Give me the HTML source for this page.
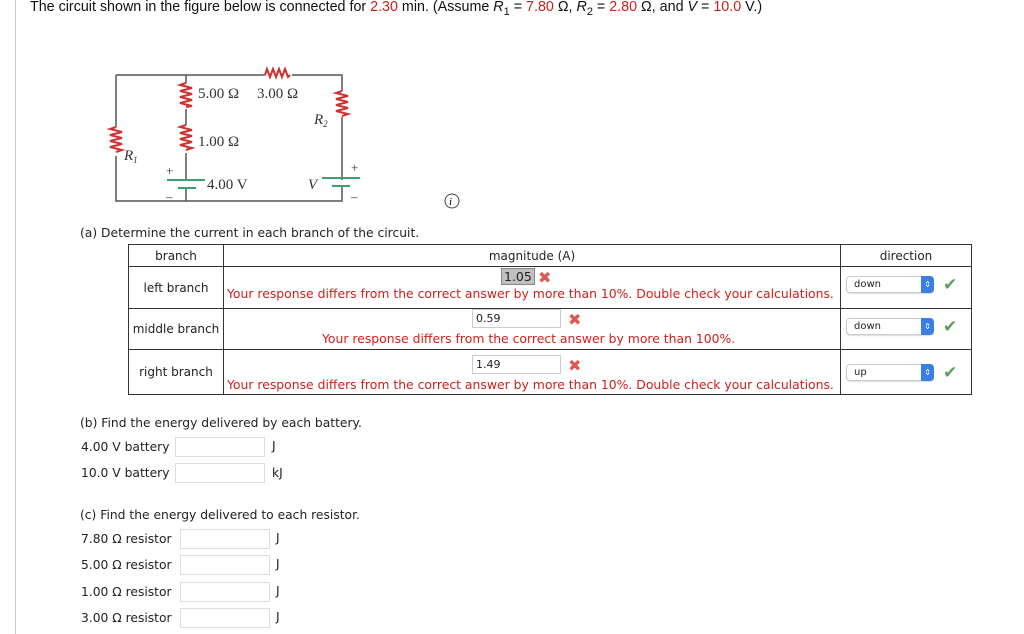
<!DOCTYPE html>
<html><head><meta charset="utf-8"><style>
body{margin:0;width:1024px;height:634px;background:#fff;position:relative;overflow:hidden;font-family:"DejaVu Sans",Verdana,sans-serif;font-size:12.3px;color:#222}
.a{position:absolute;white-space:nowrap}
.red{color:#d0201c;font-size:12.4px}
.vl{position:absolute;left:15px;top:0;width:1px;height:634px;background:#c8c8c8}
table{position:absolute;left:128px;top:244px;border-collapse:collapse}
td{border:1px solid #333;padding:0;text-align:center;font-size:12px}
.inp{position:absolute;border:1px solid #ccc;height:19px;width:89px;padding-left:3px;line-height:18px;font-size:11px;box-sizing:border-box}
.sel{position:absolute;width:88px;height:17px;border:1px solid #ccc;border-radius:4px;background:#fff;font-size:10px;line-height:16px;padding-left:7px;box-sizing:border-box;box-shadow:0 1px 1px #ddd}
.sel b{position:absolute;right:-1px;top:-1px;width:13px;height:17px;background:#3b7ee8;border-radius:0 4px 4px 0;color:#fff;font-size:8px;text-align:center;line-height:17px;font-weight:normal}
.chk{position:absolute;color:#5aa05a;font-size:17px;font-weight:bold}
.x{position:absolute;color:#e05555;font-size:16px;font-weight:bold}
.box{position:absolute;border:1px solid #ddd;width:90px;height:20px;box-sizing:border-box}
</style></head><body>
<div class="vl"></div>
<div class="a" style="left:30px;top:0px;line-height:15px;font-family:'Liberation Sans',sans-serif;font-size:14.3px;color:#111">The circuit shown in the figure below is connected for <span class="red" style="font-size:14.3px">2.30</span> min. (Assume <i>R</i><sub style="font-size:11px;line-height:0">1</sub> = <span class="red" style="font-size:14.3px">7.80</span> Ω, <i>R</i><sub style="font-size:11px;line-height:0">2</sub> = <span class="red" style="font-size:14.3px">2.80</span> Ω, and <i>V</i> = <span class="red" style="font-size:14.3px">10.0</span> V.)</div>

<svg style="position:absolute;left:0;top:0" width="480" height="215">
<g fill="none" stroke="#555" stroke-width="1.5">
<path d="M116 75H265M292 75H342V91M342 117V180M342 187V201H116V156M116 127V75"/>
<path d="M186 75V83M186 109V125M186 153V180M186 188V201"/>
</g>
<g fill="none" stroke="#d03030" stroke-width="2">
<path d="M265 75l2-6l3 8l3-8l3 8l3-8l3 8l3-8l3 8l2-2"/>
<path d="M116 127l-6 2l12 3l-12 3l12 3l-12 3l12 3l-12 3l12 3l-6 2"/>
<path d="M186 83l-6 2l12 3l-12 3l12 3l-12 3l12 3l-12 3l12 3l-6 1"/>
<path d="M186 125l-6 2l12 3l-12 3l12 3l-12 3l12 3l-12 3l12 3l-6 2"/>
<path d="M342 91l-6 2l12 3l-12 3l12 3l-12 3l12 3l-12 3l12 3l-6 2"/>
</g>
<g stroke="#3aa070" stroke-width="2">
<path d="M167 180H205M178 188H196M322 178H360M332 186H350"/>
</g>
<g font-family="Liberation Serif,serif" font-size="15" fill="#333">
<text x="198" y="98">5.00 Ω</text><text x="257" y="98">3.00 Ω</text>
<text x="198" y="146">1.00 Ω</text><text x="207" y="189">4.00 V</text>
<text x="124" y="160" font-style="italic">R<tspan font-size="9" dy="3">1</tspan></text>
<text x="314" y="124" font-style="italic">R<tspan font-size="9" dy="3">2</tspan></text>
<text x="308" y="189" font-style="italic">V</text>
<text x="166" y="175" font-size="13">+</text><text x="166" y="201" font-size="13">–</text>
<text x="351" y="172" font-size="13">+</text><text x="351" y="201" font-size="13">–</text>
</g>
<circle cx="452" cy="201" r="7" fill="none" stroke="#444"/>
<text x="449" y="205" font-family="Liberation Serif,serif" font-style="italic" font-size="11">i</text>
</svg>

<div class="a" style="left:80px;top:226px">(a) Determine the current in each branch of the circuit.</div>
<table>
<tr style="height:22px"><td style="width:94px">branch</td><td style="width:616px">magnitude (A)</td><td style="width:130px">direction</td></tr>
<tr style="height:42px"><td>left branch</td><td></td><td></td></tr>
<tr style="height:41px"><td>middle branch</td><td></td><td></td></tr>
<tr style="height:45px"><td>right branch</td><td></td><td></td></tr>
</table>
<div class="a" style="left:501px;top:268px;background:#c0c0c0;border:1px solid #888;padding:0 2px;font-size:12.5px;line-height:15px">1.05</div>
<div class="a red" style="left:227px;top:286px">Your response differs from the correct answer by more than 10%. Double check your calculations.</div>
<div class="inp" style="left:472px;top:309px">0.59</div>
<div class="a red" style="left:322px;top:331px">Your response differs from the correct answer by more than 100%.</div>
<div class="inp" style="left:472px;top:355px">1.49</div>
<div class="a red" style="left:227px;top:377px">Your response differs from the correct answer by more than 10%. Double check your calculations.</div>
<div class="x" style="left:538px;top:268px">✖</div>
<div class="x" style="left:568px;top:310px">✖</div>
<div class="x" style="left:568px;top:356px">✖</div>
<div class="sel" style="left:846px;top:276px">down<b>⇕</b></div>
<div class="sel" style="left:846px;top:318px">down<b>⇕</b></div>
<div class="sel" style="left:846px;top:364px">up<b>⇕</b></div>
<div class="chk" style="left:943px;top:275px">✔</div>
<div class="chk" style="left:943px;top:317px">✔</div>
<div class="chk" style="left:943px;top:363px">✔</div>

<div class="a" style="left:80px;top:416px">(b) Find the energy delivered by each battery.</div>
<div class="a" style="left:81px;top:440px">4.00 V battery</div><div class="box" style="left:175px;top:437px"></div><div class="a" style="left:272px;top:439px">J</div>
<div class="a" style="left:81px;top:466px">10.0 V battery</div><div class="box" style="left:175px;top:463px"></div><div class="a" style="left:272px;top:466px">kJ</div>
<div class="a" style="left:80px;top:508px">(c) Find the energy delivered to each resistor.</div>
<div class="a" style="left:81px;top:532px">7.80 Ω resistor</div><div class="box" style="left:180px;top:529px"></div><div class="a" style="left:276px;top:531px">J</div>
<div class="a" style="left:81px;top:558px">5.00 Ω resistor</div><div class="box" style="left:180px;top:555px"></div><div class="a" style="left:276px;top:557px">J</div>
<div class="a" style="left:81px;top:585px">1.00 Ω resistor</div><div class="box" style="left:180px;top:582px"></div><div class="a" style="left:276px;top:584px">J</div>
<div class="a" style="left:81px;top:611px">3.00 Ω resistor</div><div class="box" style="left:180px;top:608px"></div><div class="a" style="left:276px;top:610px">J</div>
</body></html>
